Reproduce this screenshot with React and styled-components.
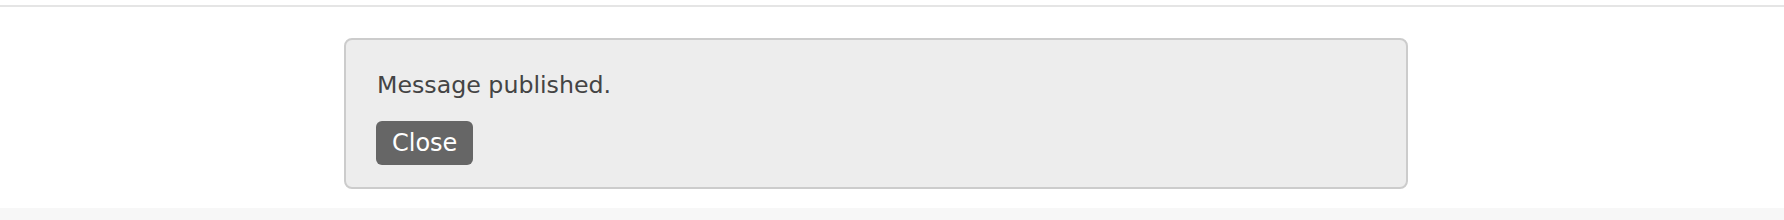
import styled, { createGlobalStyle } from "styled-components";

const GlobalStyle = createGlobalStyle`
  html, body {
    margin: 0;
    padding: 0;
    background: #fff;
    font-family: "DejaVu Sans", Verdana, sans-serif;
  }
`;

const Page = styled.div`
  display: flex;
  flex-direction: column;
  width: 1784px;
  height: 220px;
  overflow: hidden;
`;

const TopRule = styled.div`
  height: 5px;
  border-bottom: 2px solid #e5e5e5;
`;

const Main = styled.main`
  display: flex;
  padding: 31px 0 19px 344px;
`;

const Notice = styled.div`
  box-sizing: border-box;
  width: 1064px;
  height: 151px;
  padding: 31px 30px 0 31px;
  background-color: #ededed;
  border: 2px solid #cccccc;
  border-radius: 8px;
`;

const Message = styled.p`
  margin: 0 0 22px;
  font-size: 23.7px;
  line-height: 28px;
  color: #444444;
`;

const Button = styled.button`
  display: flex;
  align-items: center;
  height: 44px;
  padding: 0 16px;
  margin-left: -1px;
  border: none;
  border-radius: 6px;
  background-color: #666666;
  color: #ffffff;
  font-family: inherit;
  font-size: 24px;
  cursor: pointer;
`;

const Footer = styled.footer`
  flex: 1;
  background-color: #f7f7f7;
`;

const App = () => {
  return (
    <Page>
      <GlobalStyle />
      <TopRule />
      <Main>
        <Notice>
          <Message>Message published.</Message>
          <Button>Close</Button>
        </Notice>
      </Main>
      <Footer />
    </Page>
  );
};

export default App;
